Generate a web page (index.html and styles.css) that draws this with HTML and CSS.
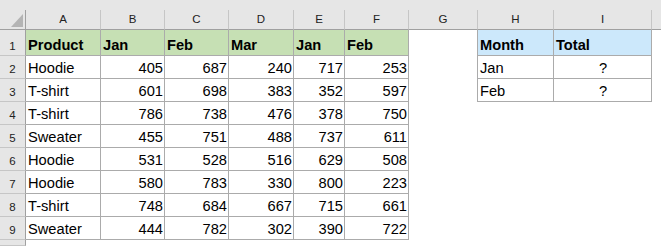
FILE: index.html
```html
<!DOCTYPE html>
<html>
<head>
<meta charset="utf-8">
<link rel="stylesheet" href="styles.css">
</head>
<body>
<div class="sheet">
  <div class="topband"></div>
  <div class="grid">
    <div class="corner"><svg class="tri" width="12" height="13" viewBox="0 0 12 13"><polygon points="12,0 12,13 0,13" fill="#b4b4b4"/></svg></div>
    <div class="ch">A</div><div class="ch">B</div><div class="ch">C</div><div class="ch">D</div><div class="ch">E</div><div class="ch">F</div><div class="ch">G</div><div class="ch">H</div><div class="ch">I</div><div class="ch last"></div>

    <div class="rh">1</div>
    <div class="c g b">Product</div><div class="c g b">Jan</div><div class="c g b">Feb</div><div class="c g b">Mar</div><div class="c g b">Jan</div><div class="c g b">Feb</div>
    <div class="e gl"></div><div class="c bl b">Month</div><div class="c bl b">Total</div><div class="e"></div>

    <div class="rh">2</div>
    <div class="c">Hoodie</div><div class="c n">405</div><div class="c n">687</div><div class="c n">240</div><div class="c n">717</div><div class="c n">253</div>
    <div class="e gl"></div><div class="c">Jan</div><div class="c m">?</div><div class="e"></div>

    <div class="rh">3</div>
    <div class="c">T-shirt</div><div class="c n">601</div><div class="c n">698</div><div class="c n">383</div><div class="c n">352</div><div class="c n">597</div>
    <div class="e gl"></div><div class="c">Feb</div><div class="c m">?</div><div class="e"></div>

    <div class="rh">4</div>
    <div class="c">T-shirt</div><div class="c n">786</div><div class="c n">738</div><div class="c n">476</div><div class="c n">378</div><div class="c n">750</div>
    <div class="e"></div><div class="e"></div><div class="e"></div><div class="e"></div>

    <div class="rh">5</div>
    <div class="c">Sweater</div><div class="c n">455</div><div class="c n">751</div><div class="c n">488</div><div class="c n">737</div><div class="c n">611</div>
    <div class="e"></div><div class="e"></div><div class="e"></div><div class="e"></div>

    <div class="rh">6</div>
    <div class="c">Hoodie</div><div class="c n">531</div><div class="c n">528</div><div class="c n">516</div><div class="c n">629</div><div class="c n">508</div>
    <div class="e"></div><div class="e"></div><div class="e"></div><div class="e"></div>

    <div class="rh">7</div>
    <div class="c">Hoodie</div><div class="c n">580</div><div class="c n">783</div><div class="c n">330</div><div class="c n">800</div><div class="c n">223</div>
    <div class="e"></div><div class="e"></div><div class="e"></div><div class="e"></div>

    <div class="rh">8</div>
    <div class="c">T-shirt</div><div class="c n">748</div><div class="c n">684</div><div class="c n">667</div><div class="c n">715</div><div class="c n">661</div>
    <div class="e"></div><div class="e"></div><div class="e"></div><div class="e"></div>

    <div class="rh">9</div>
    <div class="c">Sweater</div><div class="c n">444</div><div class="c n">782</div><div class="c n">302</div><div class="c n">390</div><div class="c n">722</div>
    <div class="e"></div><div class="e"></div><div class="e"></div><div class="e"></div>

    <div class="rh"></div>
    <div class="e"></div><div class="e"></div><div class="e"></div><div class="e"></div><div class="e"></div><div class="e"></div>
    <div class="e"></div><div class="e"></div><div class="e"></div><div class="e"></div>
  </div>
</div>
</body>
</html>
```

FILE: styles.css
```css
html, body {
  margin: 0;
  padding: 0;
  background: #ffffff;
}
body {
  width: 661px;
  height: 246px;
  overflow: hidden;
  font-family: "Liberation Sans", Arial, sans-serif;
  color: #000;
}
.sheet {
  width: 661px;
}
.topband {
  height: 10px;
  background: #e6e6e6;
}
.grid {
  display: grid;
  grid-template-columns: 26px 75px 64px 64px 65px 51px 64px 69px 76px 98px 1fr;
  grid-template-rows: 20px 26px repeat(8, 23px) 6px;
}
.grid > div {
  box-sizing: border-box;
  min-width: 0;
  overflow: hidden;
  white-space: nowrap;
}
.corner {
  background: #e6e6e6;
  border-right: 1px solid #a0a0a0;
  border-bottom: 1px solid #a0a0a0;
  display: flex;
  justify-content: flex-end;
  align-items: flex-end;
  padding: 0 2px 2px 0;
}
.tri {
  display: block;
}
.ch {
  background: #e6e6e6;
  border-right: 1px solid #c6c6c6;
  border-bottom: 1px solid #a0a0a0;
  font-size: 11.5px;
  line-height: 19px;
  text-align: center;
  color: #222;
}
.ch.last {
  border-right: none;
}
.rh {
  background: #e6e6e6;
  border-right: 1px solid #a0a0a0;
  border-bottom: 1px solid #c6c6c6;
  font-size: 11.5px;
  line-height: 14px;
  color: #222;
  display: flex;
  justify-content: center;
  align-items: flex-end;
  padding-bottom: 2px;
}
.c {
  border-right: 1px solid #ababab;
  border-bottom: 1px solid #ababab;
  font-size: 14.67px;
  line-height: 17px;
  display: flex;
  align-items: flex-end;
  padding: 0 1px 1px 2px;
}
.c.n {
  justify-content: flex-end;
}
.c.m {
  justify-content: center;
}
.b {
  font-weight: bold;
}
.g {
  background: #c6e0b4;
}
.bl {
  background: #cce8fb;
}
.e {
  background: #ffffff;
}
.e.gl {
  border-right: 1px solid #ababab;
}
```
